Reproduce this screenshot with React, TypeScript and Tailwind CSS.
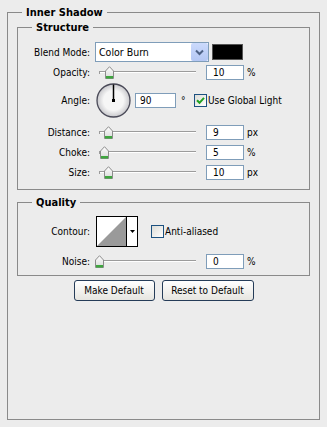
import React from "react";

function Thumb({ pos }: { pos: string }) {
  return (
    <div className={`absolute top-[2px] ${pos}`}>
      <svg width="9" height="13" viewBox="0 0 9 13">
        <defs>
          <linearGradient id="tg" x1="0" y1="0" x2="0" y2="1">
            <stop offset="0" stopColor="#ffffff" />
            <stop offset="1" stopColor="#d8d8d8" />
          </linearGradient>
        </defs>
        <path d="M0.5 12.5 V5 L4.5 0.7 L8.5 5 V12.5 Z" fill="url(#tg)" stroke="#8c8c8c" />
        <rect x="1" y="10" width="7" height="2.5" fill="#3fa63f" />
      </svg>
    </div>
  );
}

function Slider({ pos }: { pos: string }) {
  return (
    <div className="relative ml-[5px] w-[106px] h-[16px] shrink-0 flex items-center">
      <div className="ml-[4px] w-[97px] h-[2px] border-t border-t-[#9c9c9c] border-b border-b-white" />
      <div className="absolute left-[4px] top-[8px] w-[1px] h-[2px] bg-[#9c9c9c]" />
      <Thumb pos={pos} />
    </div>
  );
}

function Field({ value, w, pl }: { value: string; w: string; pl: string }) {
  return (
    <div className={`h-[15px] ${w} ${pl} shrink-0 border border-[#7f9db9] bg-white flex items-center leading-[13px]`}>
      {value}
    </div>
  );
}

function Check({ checked }: { checked?: boolean }) {
  return (
    <div className="w-[13px] h-[13px] shrink-0 border border-[#1c5180] bg-gradient-to-br from-[#dcdcd7] to-white flex items-center justify-center">
      {checked && (
        <svg width="9" height="9" viewBox="0 0 9 9">
          <path d="M1 4.2 L3.5 6.8 L8 1.8" fill="none" stroke="#21a121" strokeWidth="2" />
        </svg>
      )}
    </div>
  );
}

const label = "w-[72px] shrink-0 text-right";

function SliderRow({
  name,
  pos,
  value,
  unit,
  mt,
}: {
  name: string;
  pos: string;
  value: string;
  unit: string;
  mt: string;
}) {
  return (
    <div className={`flex items-center h-[16px] ${mt}`}>
      <div className={label}>{name}</div>
      <Slider pos={pos} />
      <div className="ml-[5px]">
        <Field value={value} w="w-[38px]" pl="pl-[6px]" />
      </div>
      <div className="ml-[3px]">{unit}</div>
    </div>
  );
}

function Button({ children, w }: { children: React.ReactNode; w: string }) {
  return (
    <div
      className={`${w} h-[21px] rounded-[3px] border border-[#253c58] bg-gradient-to-b from-white to-[#e6e5e0] flex items-center justify-center`}
    >
      {children}
    </div>
  );
}

export default function App() {
  return (
    <div className="w-[327px] h-[427px] bg-[#ececec] pt-[6px] px-[7px] pb-[7px] flex flex-col text-black text-[10px] leading-[13px] font-['DejaVu_Sans_Condensed','DejaVu_Sans',sans-serif]">
      <fieldset className="flex-1 min-w-0 border border-[#8a8a8a] pt-[2px] px-[9px]">
        <legend className="ml-[5px] px-[4px] font-bold text-[11px] leading-[13px]">Inner Shadow</legend>

        <fieldset className="min-w-0 border border-[#8a8a8a] pt-[7px] pb-[9px]">
          <legend className="ml-[14px] px-[4px] font-bold text-[11px] leading-[13px]">Structure</legend>

          <div className="flex items-center h-[22px]">
            <div className={label}>Blend Mode:</div>
            <div className="ml-[5px] w-[114px] h-[20px] shrink-0 border border-[#7f9db9] bg-white flex items-center">
              <div className="flex-1 pl-[3px] text-[10.5px]">Color Burn</div>
              <div className="w-[17px] h-[18px] rounded-[2px] bg-gradient-to-b from-[#cbdafc] to-[#b4c7f3] flex items-center justify-center">
                <svg width="9" height="7" viewBox="0 0 9 7">
                  <path d="M1 1.5 L4.5 5 L8 1.5" fill="none" stroke="#4d6185" strokeWidth="2" />
                </svg>
              </div>
            </div>
            <div className="ml-[3px] w-[31px] h-[16px] shrink-0 bg-black border border-[#555]" />
          </div>

          <SliderRow name="Opacity:" pos="left-[10px]" value="10" unit="%" mt="mt-[1px]" />

          <div className="flex items-center h-[36px] mt-[2px]">
            <div className={label}>Angle:</div>
            <div className="ml-[6px] shrink-0">
              <svg width="35" height="35" viewBox="0 0 35 35">
                <defs>
                  <radialGradient id="ag" cx="0.5" cy="0.5" r="0.5">
                    <stop offset="0.6" stopColor="#f6f6f6" />
                    <stop offset="1" stopColor="#c8c8cc" />
                  </radialGradient>
                </defs>
                <circle cx="17.5" cy="17.5" r="16.5" fill="url(#ag)" stroke="#4a4a58" strokeWidth="1.3" />
                <line x1="17.5" y1="17.5" x2="17.5" y2="1.5" stroke="#000" strokeWidth="1.5" />
                <rect x="16" y="16" width="3" height="3" fill="#000" />
              </svg>
            </div>
            <div className="ml-[4px]">
              <Field value="90" w="w-[41px]" pl="pl-[4px]" />
            </div>
            <div className="ml-[5px] w-[13px] self-start mt-[12px]">°</div>
            <Check checked />
            <div className="ml-[1px]">Use Global Light</div>
          </div>

          <SliderRow name="Distance:" pos="left-[9px]" value="9" unit="px" mt="mt-[6px]" />
          <SliderRow name="Choke:" pos="left-[5px]" value="5" unit="%" mt="mt-[4px]" />
          <SliderRow name="Size:" pos="left-[9px]" value="10" unit="px" mt="mt-[4px]" />
        </fieldset>

        <fieldset className="min-w-0 mt-[6px] border border-[#8a8a8a] pt-[7px] pb-[6px]">
          <legend className="ml-[14px] px-[4px] font-bold text-[11px] leading-[13px]">Quality</legend>

          <div className="flex items-center h-[31px]">
            <div className={label}>Contour:</div>
            <div className="ml-[6px] w-[42px] h-[31px] shrink-0 border border-black bg-white flex">
              <svg width="29" height="29" viewBox="0 0 29 29" className="shrink-0">
                <path d="M0 29 L29 0 L29 29 Z" fill="#9a9a9a" />
              </svg>
              <div className="w-[1px] bg-black shrink-0" />
              <div className="flex-1 flex items-center justify-center">
                <svg width="5" height="3" viewBox="0 0 5 3">
                  <path d="M0 0 H5 L2.5 3 Z" fill="#000" />
                </svg>
              </div>
            </div>
            <div className="ml-[13px]">
              <Check />
            </div>
            <div className="ml-[1px]">Anti-aliased</div>
          </div>

          <SliderRow name="Noise:" pos="left-[0px]" value="0" unit="%" mt="mt-[6px]" />
        </fieldset>

        <div className="mt-[4px] flex justify-center gap-[7px]">
          <Button w="w-[81px]">Make Default</Button>
          <Button w="w-[92px]">Reset to Default</Button>
        </div>
      </fieldset>
    </div>
  );
}
